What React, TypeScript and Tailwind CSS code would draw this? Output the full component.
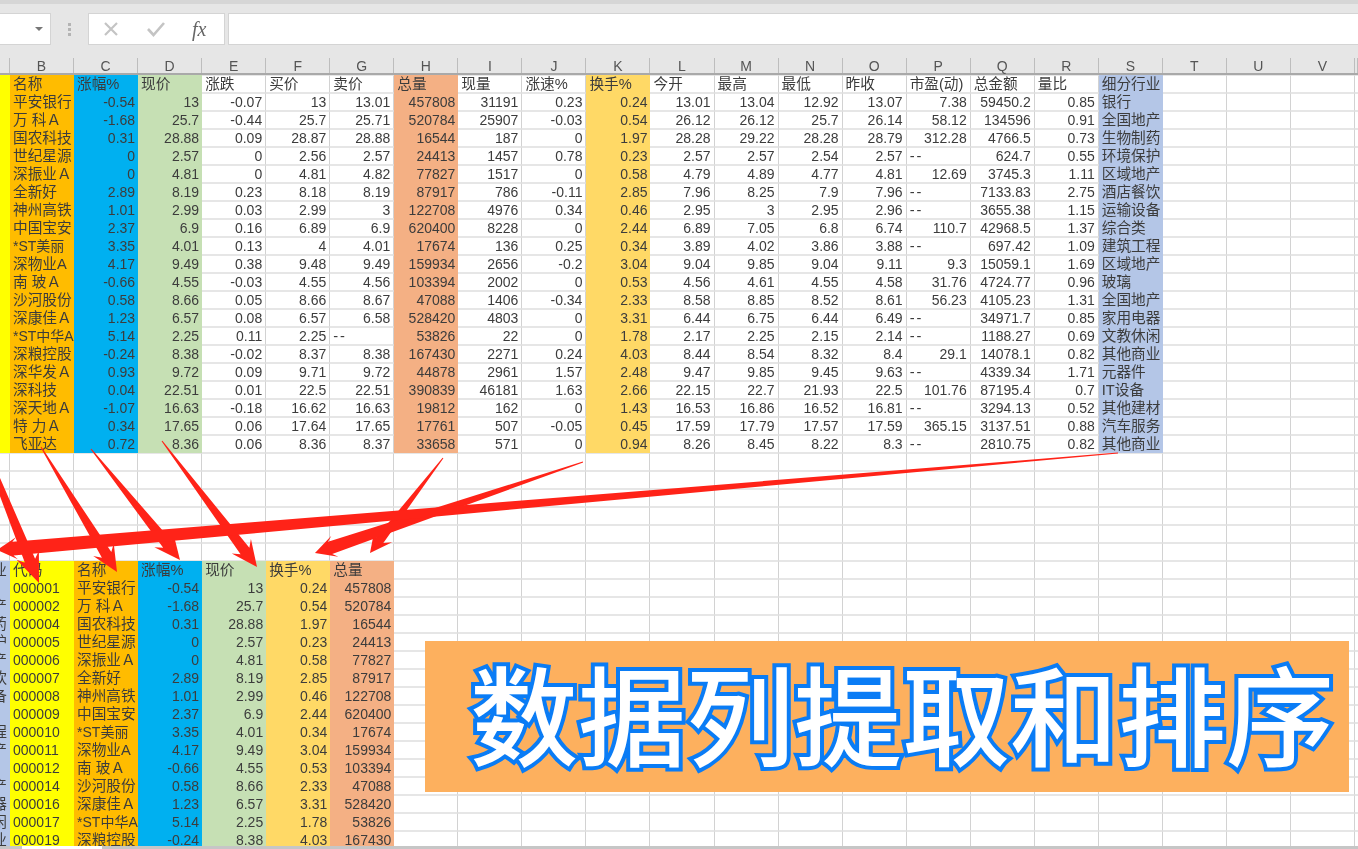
import React from "react";

type Cell = { t?: string; bg?: string; right?: boolean };

const raw = `平安银行 -0.54 13 -0.07 13 13.01 457808 31191 0.23 0.24 13.01 13.04 12.92 13.07 7.38 59450.2 0.85 银行
万_科Ａ -1.68 25.7 -0.44 25.7 25.71 520784 25907 -0.03 0.54 26.12 26.12 25.7 26.14 58.12 134596 0.91 全国地产
国农科技 0.31 28.88 0.09 28.87 28.88 16544 187 0 1.97 28.28 29.22 28.28 28.79 312.28 4766.5 0.73 生物制药
世纪星源 0 2.57 0 2.56 2.57 24413 1457 0.78 0.23 2.57 2.57 2.54 2.57 -- 624.7 0.55 环境保护
深振业Ａ 0 4.81 0 4.81 4.82 77827 1517 0 0.58 4.79 4.89 4.77 4.81 12.69 3745.3 1.11 区域地产
全新好 2.89 8.19 0.23 8.18 8.19 87917 786 -0.11 2.85 7.96 8.25 7.9 7.96 -- 7133.83 2.75 酒店餐饮
神州高铁 1.01 2.99 0.03 2.99 3 122708 4976 0.34 0.46 2.95 3 2.95 2.96 -- 3655.38 1.15 运输设备
中国宝安 2.37 6.9 0.16 6.89 6.9 620400 8228 0 2.44 6.89 7.05 6.8 6.74 110.7 42968.5 1.37 综合类
*ST美丽 3.35 4.01 0.13 4 4.01 17674 136 0.25 0.34 3.89 4.02 3.86 3.88 -- 697.42 1.09 建筑工程
深物业A 4.17 9.49 0.38 9.48 9.49 159934 2656 -0.2 3.04 9.04 9.85 9.04 9.11 9.3 15059.1 1.69 区域地产
南_玻Ａ -0.66 4.55 -0.03 4.55 4.56 103394 2002 0 0.53 4.56 4.61 4.55 4.58 31.76 4724.77 0.96 玻璃
沙河股份 0.58 8.66 0.05 8.66 8.67 47088 1406 -0.34 2.33 8.58 8.85 8.52 8.61 56.23 4105.23 1.31 全国地产
深康佳Ａ 1.23 6.57 0.08 6.57 6.58 528420 4803 0 3.31 6.44 6.75 6.44 6.49 -- 34971.7 0.85 家用电器
*ST中华A 5.14 2.25 0.11 2.25 -- 53826 22 0 1.78 2.17 2.25 2.15 2.14 -- 1188.27 0.69 文教休闲
深粮控股 -0.24 8.38 -0.02 8.37 8.38 167430 2271 0.24 4.03 8.44 8.54 8.32 8.4 29.1 14078.1 0.82 其他商业
深华发Ａ 0.93 9.72 0.09 9.71 9.72 44878 2961 1.57 2.48 9.47 9.85 9.45 9.63 -- 4339.34 1.71 元器件
深科技 0.04 22.51 0.01 22.5 22.51 390839 46181 1.63 2.66 22.15 22.7 21.93 22.5 101.76 87195.4 0.7 IT设备
深天地Ａ -1.07 16.63 -0.18 16.62 16.63 19812 162 0 1.43 16.53 16.86 16.52 16.81 -- 3294.13 0.52 其他建材
特_力Ａ 0.34 17.65 0.06 17.64 17.65 17761 507 -0.05 0.45 17.59 17.79 17.57 17.59 365.15 3137.51 0.88 汽车服务
飞亚达 0.72 8.36 0.06 8.36 8.37 33658 571 0 0.94 8.26 8.45 8.22 8.3 -- 2810.75 0.82 其他商业`
  .split("\n")
  .map((l) => l.split(" ").map((s) => s.replace("_", " ")));

const YEL = "#ffff00";
const ORG = "#ffbc00";
const BLU = "#00b0f0";
const GRN = "#c6e0b4";
const GLD = "#ffd966";
const SAL = "#f4b084";
const LAV = "#b4c6e7";

const heads = ["名称", "涨幅%", "现价", "涨跌", "买价", "卖价", "总量", "现量", "涨速%", "换手%", "今开", "最高", "最低", "昨收", "市盈(动)", "总金额", "量比", "细分行业"];
const upperBg: Record<number, string> = { 0: ORG, 1: BLU, 2: GRN, 6: SAL, 9: GLD, 17: LAV };
const letters = ["", "B", "C", "D", "E", "F", "G", "H", "I", "J", "K", "L", "M", "N", "O", "P", "Q", "R", "S", "T", "U", "V", ""];
const codes = ["000001", "000002", "000004", "000005", "000006", "000007", "000008", "000009", "000010", "000011", "000012", "000014", "000016", "000017", "000019"];

const blanks = (n: number): Cell[] => Array.from({ length: n }, () => ({}));
const isNum = (s: string) => /^-?[\d.]+$/.test(s);

const upper: Cell[][] = [
  [{ bg: YEL }, ...heads.map((t, i) => ({ t, bg: upperBg[i] })), ...blanks(4)],
  ...raw.map((r) => [
    { bg: YEL } as Cell,
    ...r.map((t, i) => ({ t, bg: upperBg[i], right: isNum(t) })),
    ...blanks(4),
  ]),
];

const gap: Cell[][] = Array.from({ length: 6 }, () => blanks(23));

const lowerRow = (side: string, cells: string[]): Cell[] => {
  const bgs = [YEL, ORG, BLU, GRN, GLD, SAL];
  return [
    { t: side, bg: LAV, right: true },
    ...cells.map((t, i) => ({ t, bg: bgs[i], right: i > 1 && isNum(t) })),
    ...blanks(16),
  ];
};

const lower: Cell[][] = [
  lowerRow("业", ["代码", "名称", "涨幅%", "现价", "换手%", "总量"]),
  ...codes.map((c, i) => {
    const r = raw[i];
    const side = r[17].length === 4 ? r[17].slice(3) : "";
    return lowerRow(side, [c, r[0], r[1], r[2], r[9], r[6]]);
  }),
];

const allRows = [...upper, ...gap, ...lower];

function arrow(x1: number, y1: number, x2: number, y2: number, w: number, hw: number, hl: number, sweep: number, tail = 1) {
  const len = Math.hypot(x2 - x1, y2 - y1);
  const dx = (x2 - x1) / len;
  const dy = (y2 - y1) / len;
  const nx = -dy;
  const ny = dx;
  const p = (along: number, off: number) => `${x2 - dx * along + nx * off},${y2 - dy * along + ny * off}`;
  return [
    p(len, tail / 2),
    p(hl, w / 2),
    p(hl + sweep, hw / 2),
    p(0, 0),
    p(hl + sweep, -hw / 2),
    p(hl, -w / 2),
    p(len, -tail / 2),
  ].join(" ");
}

const arrows = [
  arrow(-20, 437, 39, 583, 11, 24, 24, 6, 4),
  arrow(41, 447, 117, 572, 11, 24, 20, 6),
  arrow(91, 449, 180, 560, 11, 24, 20, 6),
  arrow(162, 441, 257, 567, 11, 24, 20, 6),
  arrow(443, 458, 370, 553, 9, 22, 16, 6),
  arrow(583, 462, 315, 553, 13, 22, 16, 5),
  arrow(1118, 453, -3, 550, 14, 22, 16, 4),
];

export default function App() {
  return (
    <div className="relative flex h-[849px] w-full flex-col overflow-hidden bg-[#e6e6e6] font-['Liberation_Sans','Noto_Sans_CJK_SC',sans-serif] text-[#3c3c3c] blur-[0.35px]">
      {/* formula bar */}
      <div className="h-[4px] shrink-0 bg-[#d6d6d6]" />
      <div className="mt-[9px] flex h-[32px] shrink-0 items-stretch">
        <div className="flex w-[51px] items-center justify-end border-y border-r border-[#d4d4d4] bg-white pr-[7px]">
          <div className="h-0 w-0 border-x-[4px] border-t-[4px] border-x-transparent border-t-[#777]" />
        </div>
        <div className="ml-[17px] mr-[17px] flex w-[3px] flex-col items-center justify-center gap-[2px]">
          <span className="h-[3px] w-[3px] bg-[#b4b4b4]" />
          <span className="h-[3px] w-[3px] bg-[#b4b4b4]" />
          <span className="h-[3px] w-[3px] bg-[#b4b4b4]" />
        </div>
        <div className="flex w-[137px] items-center border border-[#d4d4d4] bg-white">
          <svg width="16" height="16" viewBox="0 0 16 16" className="ml-[14px]">
            <path d="M2 2 L14 14 M14 2 L2 14" stroke="#c4c4c4" strokeWidth="2.2" fill="none" />
          </svg>
          <svg width="18" height="16" viewBox="0 0 18 16" className="ml-[28px]">
            <path d="M1 8 L6.5 14 L17 2" stroke="#c4c4c4" strokeWidth="2.6" fill="none" />
          </svg>
          <span className="ml-[27px] font-['Liberation_Serif',serif] text-[20px] italic leading-none text-[#666]">fx</span>
        </div>
        <div className="ml-[3px] flex-1 border-y border-l border-[#d4d4d4] bg-white" />
      </div>
      <div className="h-[13px] shrink-0" />

      {/* column letters */}
      <div className="grid h-[17px] shrink-0 grid-cols-[10px_repeat(21,64.05px)_1fr] border-b-2 border-[#a9a9a9]">
        {letters.map((l, i) => (
          <div key={i} className="flex items-center justify-center border-r border-[#bdbdbd] text-[14px] leading-none text-[#555]">
            {l}
          </div>
        ))}
      </div>

      {/* sheet */}
      <div className="min-h-0 flex-1 overflow-hidden bg-white">
        <div className="grid grid-cols-[10px_repeat(21,64.05px)_1fr] auto-rows-[18px]">
          {allRows.flatMap((row, ri) =>
            row.map((c, ci) => {
              const dash = c.t === "--";
              const small = !!c.t && (isNum(c.t) || c.t.startsWith("*"));
              return (
                <div
                  key={`${ri}-${ci}`}
                  style={c.bg ? { backgroundColor: c.bg } : undefined}
                  className={`flex items-center overflow-hidden whitespace-pre leading-[18px] ${small ? "text-[14px]" : "text-[14.67px]"} ${
                    c.bg ? "" : "border-y border-r border-y-[#e6e6e6] border-r-[#d2d2d2]"
                  } ${c.right ? "justify-end pr-[3px]" : "pl-[3px]"} ${ci === 0 ? "pl-0 pr-0" : ""} ${dash ? "tracking-[2px]" : ""}`}
                >
                  {c.t}
                </div>
              );
            }),
          )}
        </div>
      </div>
      <div className="flex h-[3px] shrink-0 bg-[#c6c6c6]">
        <div className="ml-[22px] w-[80px] bg-white" />
      </div>

      {/* arrows */}
      <svg className="pointer-events-none absolute left-0 top-0" width="1358" height="849" viewBox="0 0 1358 849">
        {arrows.map((p, i) => (
          <polygon key={i} points={p} fill="#ff2318" />
        ))}
      </svg>

      {/* banner */}
      <div className="absolute left-[425px] top-[641px] flex h-[151px] w-[924px] items-center bg-[#fdb05e] pb-[12px] pl-[45px]">
        <span className="whitespace-nowrap font-['Noto_Sans_CJK_SC',sans-serif] text-[108px] font-medium leading-none text-white [-webkit-text-stroke:8px_#0a7cf5] [paint-order:stroke_fill]">
          数据列提取和排序
        </span>
      </div>
    </div>
  );
}
